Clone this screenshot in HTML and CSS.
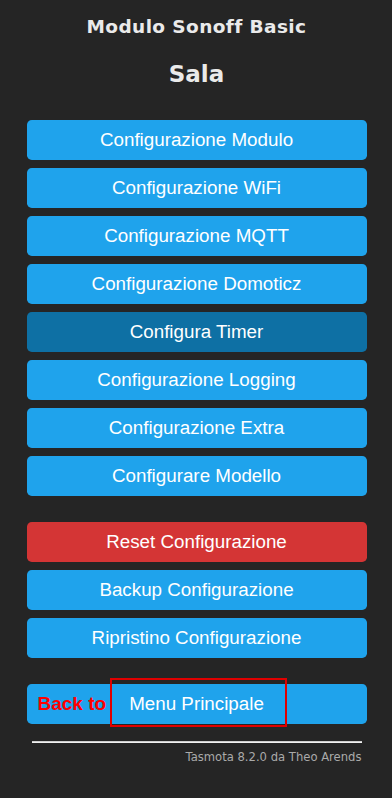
FILE: index.html
```html
<!DOCTYPE html>
<html>
<head>
<meta charset="utf-8">
<link rel="stylesheet" href="styles.css">
</head>
<body>
<div class="wrap">
  <div class="head">
    <h3 class="module">Modulo Sonoff Basic</h3>
    <h2 class="device">Sala</h2>
  </div>
  <div class="group">
    <button class="btn">Configurazione Modulo</button>
    <button class="btn">Configurazione WiFi</button>
    <button class="btn">Configurazione MQTT</button>
    <button class="btn">Configurazione Domoticz</button>
    <button class="btn btn-active">Configura Timer</button>
    <button class="btn">Configurazione Logging</button>
    <button class="btn">Configurazione Extra</button>
    <button class="btn">Configurare Modello</button>
  </div>
  <div class="group">
    <button class="btn btn-red">Reset Configurazione</button>
    <button class="btn">Backup Configurazione</button>
    <button class="btn">Ripristino Configurazione</button>
  </div>
  <div class="group">
    <div class="back">
      <button class="btn">Menu Principale</button>
      <span class="back-label">Back to</span>
      <span class="highlight"></span>
    </div>
  </div>
  <div class="footer">
    <hr class="rule">
    <span class="credit">Tasmota 8.2.0 da Theo Arends</span>
  </div>
</div>
</body>
</html>
```

FILE: styles.css
```css
html, body {
  margin: 0;
  padding: 0;
  background: #252525;
}
body {
  font-family: "DejaVu Sans", Verdana, sans-serif;
  color: #eaeaea;
}
.wrap {
  width: 340px;
  margin: 0 auto;
  padding-left: 1px;
}
.head {
  text-align: center;
  padding-top: 15px;
}
.module {
  margin: 0;
  font-size: 18.5px;
  font-weight: bold;
  line-height: 24px;
  letter-spacing: 0.4px;
}
.device {
  margin: 21px 0 0 0;
  font-size: 23px;
  font-weight: bold;
  line-height: 28px;
}
.group {
  display: flex;
  flex-direction: column;
  gap: 8px;
  margin-top: 26px;
}
.head + .group {
  margin-top: 32px;
}
.btn {
  display: block;
  width: 100%;
  height: 40px;
  border: 0;
  border-radius: 4.8px;
  background: #1fa3ec;
  color: #fff;
  font-family: "Liberation Sans", Arial, sans-serif;
  font-size: 18.8px;
  padding: 0;
  margin: 0;
}
.btn-active {
  background: #0e70a4;
}
.btn-red {
  background: #d43535;
}
.back {
  position: relative;
}
.back-label {
  position: absolute;
  left: 11px;
  top: 9px;
  font-family: "Liberation Sans", Arial, sans-serif;
  font-weight: bold;
  font-size: 19px;
  color: #ff0000;
}
.highlight {
  position: absolute;
  left: 83px;
  top: -6px;
  width: 173px;
  height: 45px;
  border: 2px solid #e00000;
}
.footer {
  text-align: right;
  font-size: 11.6px;
  margin-top: 17px;
}
.rule {
  margin: 0 5px 0 5px;
  border: 0;
  border-top: 1px solid #cfcfcf;
  border-bottom: 1px solid #f0f0f0;
  height: 0;
}
.credit {
  display: block;
  margin-top: 8px;
  margin-right: 5px;
  color: #aaa;
  line-height: 13px;
}
```
